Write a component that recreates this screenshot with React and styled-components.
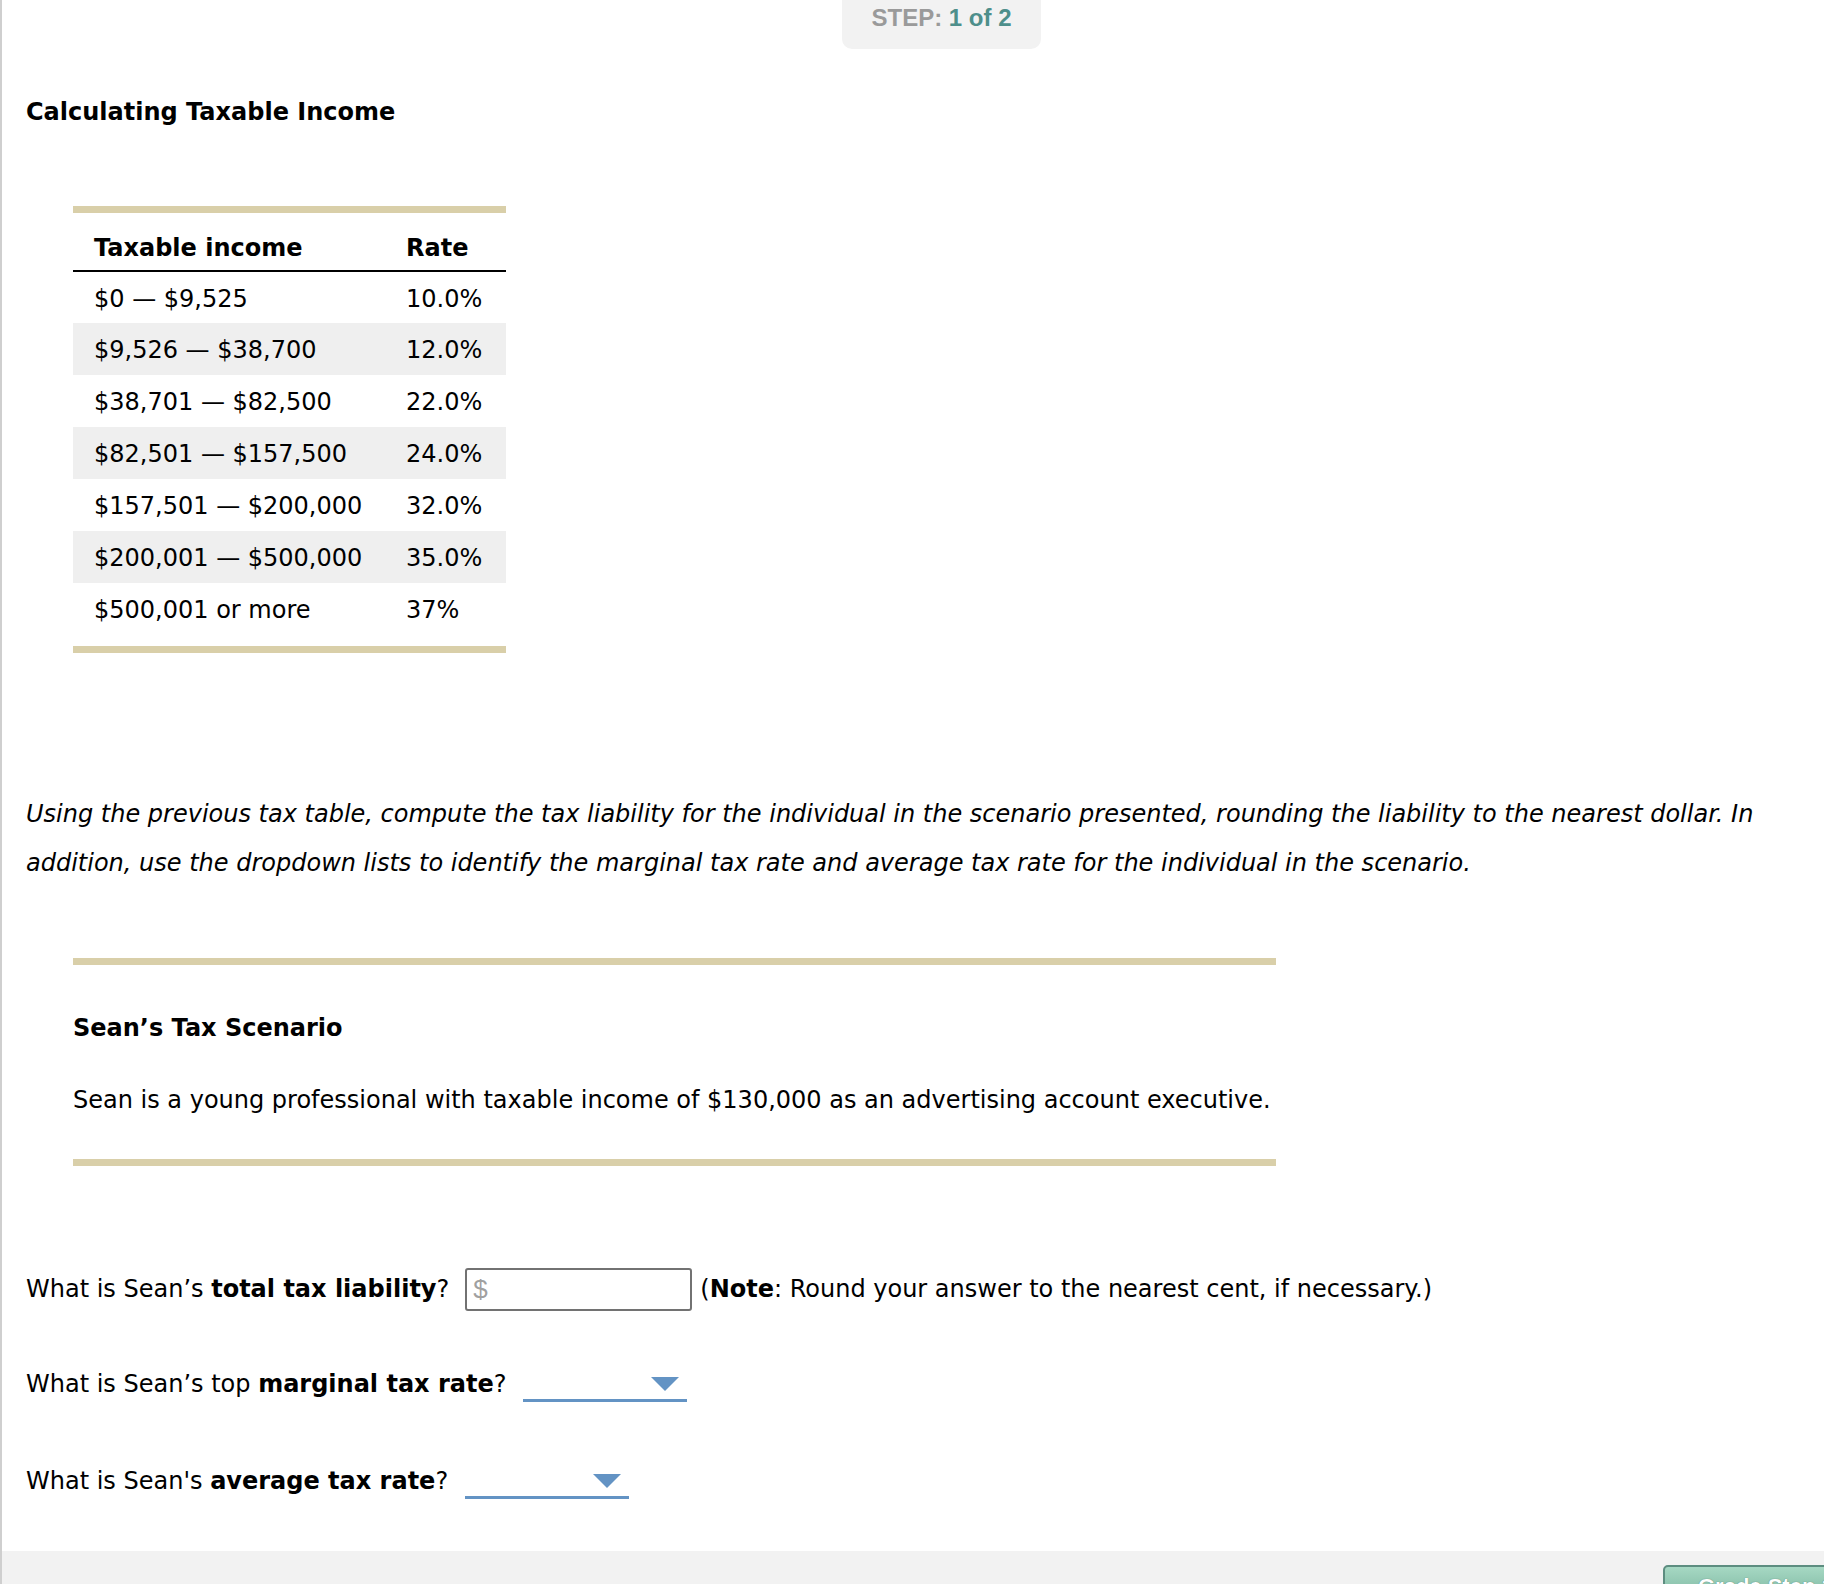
import React from "react";
import styled, { createGlobalStyle } from "styled-components";

const GlobalStyle = createGlobalStyle`
  html, body {
    margin: 0;
    padding: 0;
    background: #fff;
  }
  body {
    font-family: "DejaVu Sans", Verdana, sans-serif;
    color: #000;
  }
`;

const Page = styled.div`
  min-height: 1584px;
  border-left: 2px solid #cfcfcf;
  display: flex;
  flex-direction: column;
  overflow: hidden;
`;

const StepTab = styled.div`
  align-self: flex-start;
  margin-left: 840px;
  width: 199px;
  height: 49px;
  box-sizing: border-box;
  padding-top: 6px;
  background: #f2f2f2;
  border-radius: 0 0 10px 10px;
  text-align: center;
  font-family: "Liberation Sans", Arial, sans-serif;
  font-weight: bold;
  font-size: 24px;
  line-height: 24px;
  color: #9a9a9a;
`;

const StepCount = styled.span`
  color: #4e8f8b;
`;

const Content = styled.div`
  padding-left: 24px;
  display: flex;
  flex-direction: column;
  align-items: flex-start;
  font-size: 24px;
`;

const Title = styled.h2`
  margin: 49px 0 0;
  font-size: 24px;
  line-height: 28px;
  font-weight: bold;
`;

const TableFrame = styled.div`
  margin: 80px 0 0 47px;
  border-top: 7px solid #d9cfa9;
  border-bottom: 7px solid #d9cfa9;
  padding-bottom: 11px;
`;

const RateTable = styled.table`
  width: 433px;
  table-layout: fixed;
  border-collapse: collapse;
  font-size: 24px;
`;

const HeadCell = styled.th`
  height: 58px;
  padding: 13px 0 0 21px;
  text-align: left;
  font-weight: bold;
  border-bottom: 2px solid #000;
  box-sizing: border-box;
`;

const Row = styled.tr`
  background: ${({ $shaded }) => ($shaded ? "#efefef" : "transparent")};
`;

const Cell = styled.td`
  height: 52px;
  padding: 2px 0 0 21px;
  box-sizing: border-box;
  white-space: nowrap;
`;

const Instructions = styled.p`
  margin: 137px 0 0;
  width: 1790px;
  font-style: italic;
  font-size: 24px;
  line-height: 49px;
`;

const Scenario = styled.section`
  margin: 70px 0 0 47px;
  width: 1203px;
  border-top: 7px solid #d9cfa9;
  border-bottom: 7px solid #d9cfa9;
  padding: 49px 0 44px;
`;

const ScenarioTitle = styled.h3`
  margin: 0;
  font-size: 24px;
  line-height: 29px;
  font-weight: bold;
`;

const ScenarioText = styled.p`
  margin: 43px 0 0;
  font-size: 24px;
  line-height: 29px;
  white-space: nowrap;
`;

const Question = styled.div`
  display: flex;
  align-items: center;
  height: 44px;
  margin-top: ${({ $gap }) => $gap}px;
  font-size: 24px;
  white-space: nowrap;
`;

const Strong = styled.b`
  font-weight: bold;
`;

const MoneyInput = styled.div`
  margin-left: 16px;
  width: 227px;
  height: 43px;
  box-sizing: border-box;
  border: 2px solid #727272;
  border-radius: 3px;
  padding-left: 6px;
  display: flex;
  align-items: center;
  font-family: "Liberation Sans", Arial, sans-serif;
  font-size: 26px;
  color: #a0a0a0;
`;

const Note = styled.span`
  margin-left: 8px;
`;

const Dropdown = styled.div`
  margin-left: 17px;
  width: 164px;
  height: 36px;
  box-sizing: border-box;
  border-bottom: 3px solid #6393c4;
  display: flex;
  align-items: center;
  justify-content: flex-end;
  padding: 3px 8px 0 0;
`;

const Caret = styled.span`
  width: 0;
  height: 0;
  border-left: 14px solid transparent;
  border-right: 14px solid transparent;
  border-top: 14px solid #6393c4;
`;

const Footer = styled.div`
  margin-top: auto;
  height: 33px;
  background: #f2f2f2;
  display: flex;
  justify-content: flex-start;
  padding-left: 1661px;
  padding-top: 14px;
  box-sizing: border-box;
  overflow: hidden;
`;

const GradeButton = styled.button`
  flex: none;
  width: 220px;
  height: 40px;
  padding: 4px 0 0 33px;
  text-align: left;
  border: 2px solid #5d8d80;
  border-radius: 5px 0 0 0;
  background: linear-gradient(#a6d8c3, #78b39d);
  color: #fff;
  font-family: "Liberation Sans", Arial, sans-serif;
  font-weight: bold;
  font-size: 22px;
  line-height: 24px;
  text-shadow: 0 0 1px #3d6b5e;
`;

const brackets = [
  ["$0 \u2014 $9,525", "10.0%"],
  ["$9,526 \u2014 $38,700", "12.0%"],
  ["$38,701 \u2014 $82,500", "22.0%"],
  ["$82,501 \u2014 $157,500", "24.0%"],
  ["$157,501 \u2014 $200,000", "32.0%"],
  ["$200,001 \u2014 $500,000", "35.0%"],
  ["$500,001 or more", "37%"],
];

const App = () => (
  <>
    <GlobalStyle />
    <Page>
      <StepTab>
        STEP: <StepCount>1 of 2</StepCount>
      </StepTab>
      <Content>
        <Title>Calculating Taxable Income</Title>

        <TableFrame>
          <RateTable>
            <colgroup>
              <col style={{ width: 312 }} />
              <col style={{ width: 121 }} />
            </colgroup>
            <thead>
              <tr>
                <HeadCell>Taxable income</HeadCell>
                <HeadCell>Rate</HeadCell>
              </tr>
            </thead>
            <tbody>
              {brackets.map(([range, rate], i) => (
                <Row key={range} $shaded={i % 2 === 1}>
                  <Cell>{range}</Cell>
                  <Cell>{rate}</Cell>
                </Row>
              ))}
            </tbody>
          </RateTable>
        </TableFrame>

        <Instructions>
          Using the previous tax table, compute the tax liability for the individual in the
          scenario presented, rounding the liability to the nearest dollar. In addition, use the
          dropdown lists to identify the marginal tax rate and average tax rate for the individual
          in the scenario.
        </Instructions>

        <Scenario>
          <ScenarioTitle>Sean’s Tax Scenario</ScenarioTitle>
          <ScenarioText>
            Sean is a young professional with taxable income of $130,000 as an advertising account
            executive.
          </ScenarioText>
        </Scenario>

        <Question $gap={101}>
          What is Sean’s&nbsp;<Strong>total tax liability</Strong>?
          <MoneyInput>$</MoneyInput>
          <Note>
            (<Strong>Note</Strong>: Round your answer to the nearest cent, if necessary.)
          </Note>
        </Question>

        <Question $gap={51}>
          What is Sean’s top&nbsp;<Strong>marginal tax rate</Strong>?
          <Dropdown>
            <Caret />
          </Dropdown>
        </Question>

        <Question $gap={53}>
          What is Sean's&nbsp;<Strong>average tax rate</Strong>?
          <Dropdown>
            <Caret />
          </Dropdown>
        </Question>
      </Content>

      <Footer>
        <GradeButton>Grade Step 1</GradeButton>
      </Footer>
    </Page>
  </>
);

export default App;
